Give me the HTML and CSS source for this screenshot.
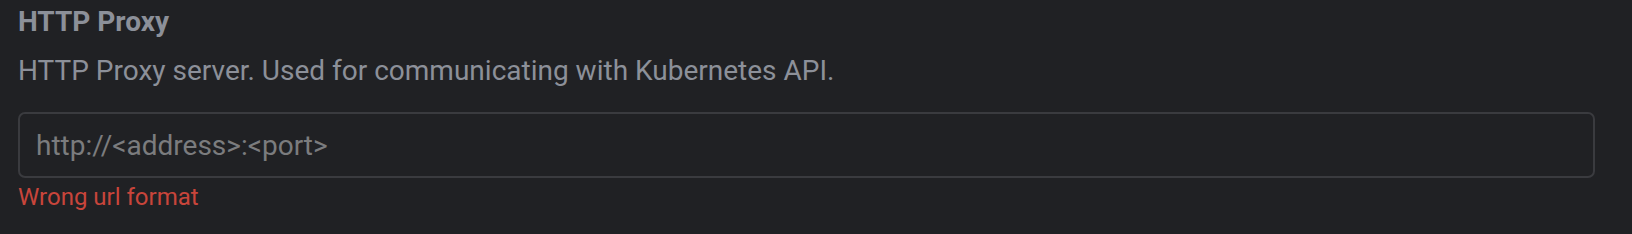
FILE: index.html
```html
<!DOCTYPE html>
<html>
<head>
<meta charset="utf-8">
<link rel="stylesheet" href="styles.css">
</head>
<body>
<div class="field">
  <div class="title">HTTP Proxy</div>
  <div class="desc">HTTP Proxy server. Used for communicating with Kubernetes API.</div>
  <input class="input" type="text" placeholder="http://&lt;address&gt;:&lt;port&gt;">
  <div class="error">Wrong url format</div>
</div>
</body>
</html>
```
FILE: styles.css
```css
html, body {
  margin: 0;
  padding: 0;
  background: #202124;
  height: 100%;
}
body {
  font-family: Roboto, "Noto Sans", sans-serif;
}
.field {
  display: flex;
  flex-direction: column;
  padding: 5px 37px 0 18px;
}
.title {
  font-size: 28px;
  font-weight: 700;
  color: #8c9099;
  line-height: 33px;
}
.desc {
  font-size: 28px;
  color: #8c9099;
  line-height: 33px;
  margin-top: 16px;
}
.input {
  margin-top: 25px;
  height: 66px;
  box-sizing: border-box;
  border: 2px solid #3a3b3f;
  border-radius: 7px;
  background: #202124;
  padding: 0 16px;
  font-family: Roboto, "Noto Sans", sans-serif;
  font-size: 28px;
  color: #bbb;
  outline: none;
}
.input::placeholder {
  color: #7b7c7e;
}
.error {
  font-size: 24px;
  color: #c8453b;
  line-height: 28px;
  margin-top: 5px;
}
```
